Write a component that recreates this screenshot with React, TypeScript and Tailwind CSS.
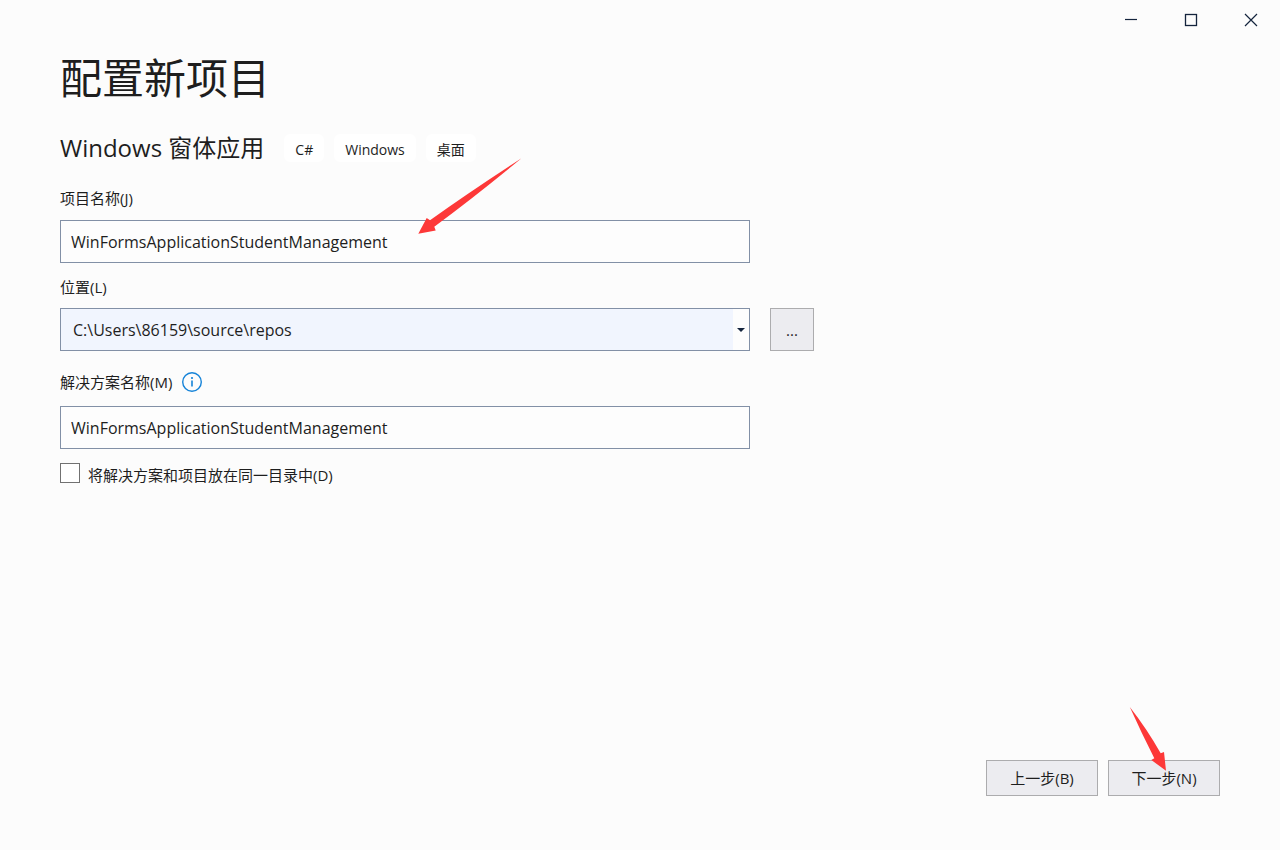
import type { ReactNode } from "react";

const tags = ["C#", "Windows", "桌面"];

function CaptionButton({ label, children }: { label: string; children: ReactNode }) {
  return (
    <button type="button" aria-label={label} className="flex h-10 w-15 items-center justify-center text-[#14243d]">
      <svg width="16" height="16" viewBox="0 0 16 16" fill="none" stroke="currentColor" aria-hidden="true">
        {children}
      </svg>
    </button>
  );
}

function TextField({ id }: { id: string }) {
  return (
    <input
      id={id}
      type="text"
      defaultValue="WinFormsApplicationStudentManagement"
      className="block h-[43px] w-full border border-[#8290a6] bg-[#fdfdfd] px-2.5 text-base outline-none"
    />
  );
}

function FooterButton({ children }: { children: ReactNode }) {
  return (
    <button type="button" className="h-9 w-28 border border-[#acacae] bg-[#ececf0] text-[15px]">
      {children}
    </button>
  );
}

export default function App() {
  return (
    <div className="flex min-h-screen flex-col bg-[#fcfcfc] font-['Open_Sans','Noto_Sans_CJK_SC',sans-serif] text-[15px] leading-5 text-[#1e1e1e]">
      <header className="flex h-10 justify-end">
        <CaptionButton label="最小化">
          <path d="M3 7.5h12" strokeWidth="1.2" />
        </CaptionButton>
        <CaptionButton label="最大化">
          <rect x="3.5" y="2.5" width="11" height="11" strokeWidth="1.3" />
        </CaptionButton>
        <CaptionButton label="关闭">
          <path d="M3 2l12 12M15 2L3 14" strokeWidth="1.2" />
        </CaptionButton>
      </header>

      <main className="flex flex-1 flex-col px-15 pt-2">
        <h1 className="text-[42px] leading-[60px]">配置新项目</h1>

        <div className="mt-6 flex items-center gap-5">
          <h2 className="text-2xl leading-8">Windows 窗体应用</h2>
          <ul className="flex gap-2.5">
            {tags.map((tag) => (
              <li key={tag} className="rounded-md bg-white px-[11px] pt-1 text-sm leading-6">
                {tag}
              </li>
            ))}
          </ul>
        </div>

        <form className="mt-6 flex flex-col">
          <label htmlFor="project" className="self-start">项目名称(J)</label>
          <div className="relative mt-3 w-full max-w-[690px]">
            <TextField id="project" />
            <svg className="pointer-events-none absolute -top-[62px] left-[358px]" width="104" height="76" viewBox="0 0 104 76" aria-hidden="true">
              <path d="M.3 75.700L8.700 60L12 62.300Q53 33 103.500 .3Q56 39.500 16.300 68.700L17.700 72.500z" fill="#fd3838" />
            </svg>
          </div>

          <label htmlFor="location" className="mt-3.5 self-start">位置(L)</label>
          <div className="mt-[11px] flex gap-5">
            <div className="relative w-full max-w-[690px]">
              <select
                id="location"
                className="block h-[43px] w-full appearance-none border border-[#8290a6] bg-[#f1f5fe] px-3 text-base outline-none"
              >
                <option>C:\Users\86159\source\repos</option>
              </select>
              <span className="pointer-events-none absolute inset-y-px right-px flex w-4 items-center justify-center bg-[#fdfdfd]">
                <svg width="8" height="4" viewBox="0 0 8 4" aria-hidden="true">
                  <path d="M0 0h8L4 4z" fill="#14243d" />
                </svg>
              </span>
            </div>
            <button type="button" aria-label="浏览" className="h-[43px] w-11 shrink-0 border border-[#acacae] bg-[#ececf0]">
              ...
            </button>
          </div>

          <div className="mt-[21px] flex items-center gap-2.5">
            <label htmlFor="solution">解决方案名称(M)</label>
            <svg width="20" height="20" viewBox="0 0 20 20" fill="none" stroke="#1583d8" aria-hidden="true">
              <circle cx="10" cy="10" r="9.300" strokeWidth="1.4" />
              <path d="M10 8.500v6" strokeWidth="1.6" />
              <circle cx="10" cy="6" r="1.100" fill="#1583d8" stroke="none" />
            </svg>
          </div>
          <div className="mt-3.5 w-full max-w-[690px]">
            <TextField id="solution" />
          </div>

          <div className="mt-3.5 flex gap-2">
            <input id="same-dir" type="checkbox" className="size-5 appearance-none border border-[#717171] bg-white checked:bg-[#1583d8]" />
            <label htmlFor="same-dir" className="pt-0.5">将解决方案和项目放在同一目录中(D)</label>
          </div>
        </form>
      </main>

      <footer className="flex justify-end gap-2.5 px-15 pb-[54px]">
        <FooterButton>上一步(B)</FooterButton>
        <div className="relative">
          <FooterButton>下一步(N)</FooterButton>
          <svg className="pointer-events-none absolute -top-[53px] left-[21px]" width="38" height="64" viewBox="0 0 38 64" aria-hidden="true">
            <path d="M.8 0Q18 22 31.700 46.300L35 45L37 63.700L22.300 53L25.300 51.300Q12.500 26 .8 0z" fill="#fd3838" />
          </svg>
        </div>
      </footer>
    </div>
  );
}
